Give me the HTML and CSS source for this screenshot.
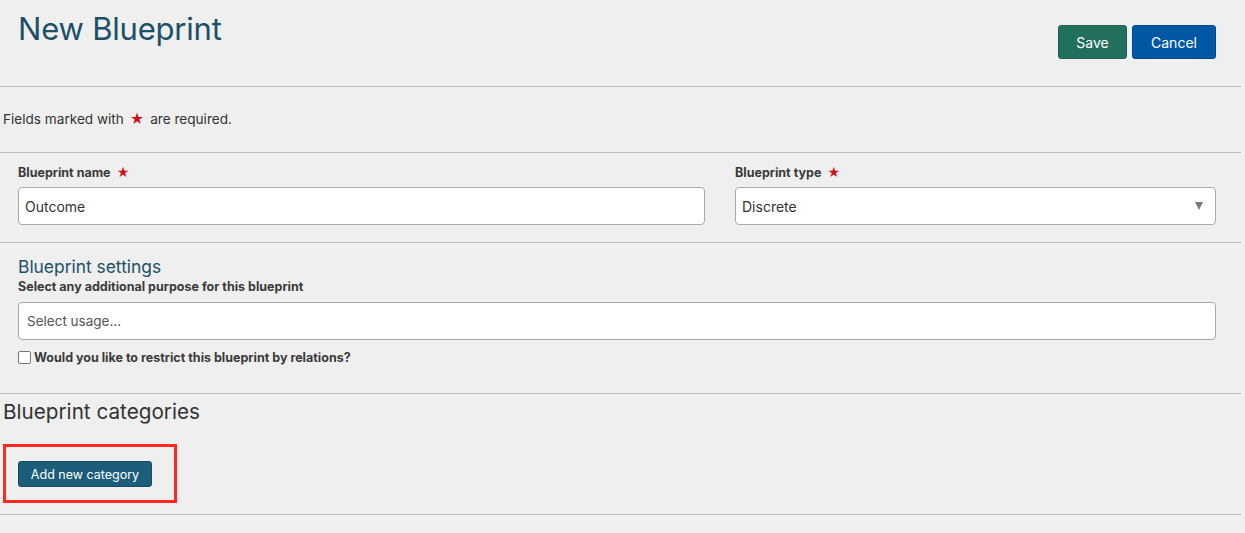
FILE: index.html
```html
<!DOCTYPE html>
<html lang="en">
<head>
<meta charset="utf-8">
<title>New Blueprint</title>
<link rel="stylesheet" href="styles.css">
</head>
<body>
<main class="page">
  <header class="page-header">
    <h1 class="page-title">New Blueprint</h1>
    <div class="actions">
      <button class="btn btn-save" type="button">Save</button>
      <button class="btn btn-cancel" type="button">Cancel</button>
    </div>
  </header>

  <section class="section required-note">
    <p>Fields marked with <span class="star">★</span> are required.</p>
  </section>

  <section class="section fields">
    <div class="field">
      <label class="label">Blueprint name <span class="star">★</span></label>
      <div class="input">Outcome</div>
    </div>
    <div class="field">
      <label class="label">Blueprint type <span class="star">★</span></label>
      <div class="input select">Discrete<span class="caret"></span></div>
    </div>
  </section>

  <section class="section settings">
    <h2 class="sub-title">Blueprint settings</h2>
    <label class="label">Select any additional purpose for this blueprint</label>
    <div class="input placeholder">Select usage...</div>
    <label class="check"><span class="box"></span>Would you like to restrict this blueprint by relations?</label>
  </section>

  <section class="section categories">
    <h2 class="cat-title">Blueprint categories</h2>
    <div class="highlight">
      <button class="btn btn-add" type="button">Add new category</button>
    </div>
  </section>
</main>
</body>
</html>
```

FILE: styles.css
```css
* { box-sizing: border-box; }
html, body {
  margin: 0;
  background: #efefef;
  font-family: Inter, "Noto Sans", sans-serif;
  color: #333;
}
.page {
  margin-right: 4px;
}
.page-header {
  height: 87px;
  border-bottom: 1px solid #bdbdbd;
  display: flex;
  justify-content: space-between;
  align-items: flex-start;
  padding: 0 25px 0 18px;
}
.page-title {
  margin: 9px 0 0;
  font-size: 31px;
  font-weight: 400;
  line-height: 40px;
  color: #1b5068;
  letter-spacing: -0.2px;
}
.actions {
  display: flex;
  gap: 5px;
  margin-top: 25px;
}
.btn {
  font-family: inherit;
  font-size: 14px;
  color: #fff;
  border-radius: 3px;
  cursor: pointer;
}
.btn-save {
  width: 69px;
  height: 34px;
  background: #226f5e;
  border: 1px solid #1d604f;
}
.btn-cancel {
  width: 84px;
  height: 34px;
  background: #0058a4;
  border: 1px solid #004b8c;
}
.section {
  border-bottom: 1px solid #bdbdbd;
}
.required-note {
  height: 66px;
  display: flex;
  align-items: center;
  padding: 0 3px;
}
.required-note p {
  margin: 0 0 2px;
  font-size: 13.6px;
  color: #333;
}
.star {
  color: #d0101b;
  margin: 0 2px;
  font-size: 14px;
}
.label .star {
  font-size: 12.5px;
  margin: 0 0 0 3px;
}
.fields {
  height: 90px;
  display: grid;
  grid-template-columns: 687px 1fr;
  column-gap: 30px;
  padding: 12px 25px 0 18px;
}
.label {
  display: block;
  font-size: 12.5px;
  font-weight: 700;
  color: #3a3a3a;
  line-height: 16px;
  margin-bottom: 6px;
}
.input {
  height: 38px;
  background: #fff;
  border: 1px solid #a9a9a9;
  border-radius: 4px;
  display: flex;
  align-items: center;
  padding: 0 6px;
  font-size: 14px;
  color: #333;
}
.select {
  justify-content: space-between;
}
.caret {
  width: 0;
  height: 0;
  border-left: 4.5px solid transparent;
  border-right: 4.5px solid transparent;
  border-top: 8px solid #7a7a7a;
  margin-right: 6px;
}
.settings {
  height: 151px;
  padding: 12px 25px 0 18px;
}
.sub-title {
  margin: 0;
  font-size: 17.4px;
  font-weight: 400;
  line-height: 24px;
  color: #1b5068;
}
.settings .label {
  margin-bottom: 7px;
}
.placeholder {
  color: #555;
  font-size: 13.5px;
  padding-left: 8px;
}
.check {
  display: flex;
  align-items: center;
  margin: 10px 0 0;
  font-size: 12.5px;
  font-weight: 700;
  color: #3a3a3a;
}
.box {
  width: 13px;
  height: 13px;
  border: 1px solid #767676;
  border-radius: 2px;
  background: #fff;
  margin-right: 3px;
}
.categories {
  height: 121px;
  padding: 5px 3px 0;
}
.cat-title {
  margin: 0;
  font-size: 20.7px;
  font-weight: 400;
  line-height: 26px;
  color: #333;
}
.highlight {
  margin-top: 19px;
  width: 174px;
  height: 59px;
  border: 3px solid #ff2a1f;
  padding: 14px 0 0 12px;
}
.btn-add {
  height: 26px;
  width: 134px;
  font-size: 12.5px;
  background: #1c5e7a;
  border: 1px solid #164b62;
  padding: 0;
}
```
